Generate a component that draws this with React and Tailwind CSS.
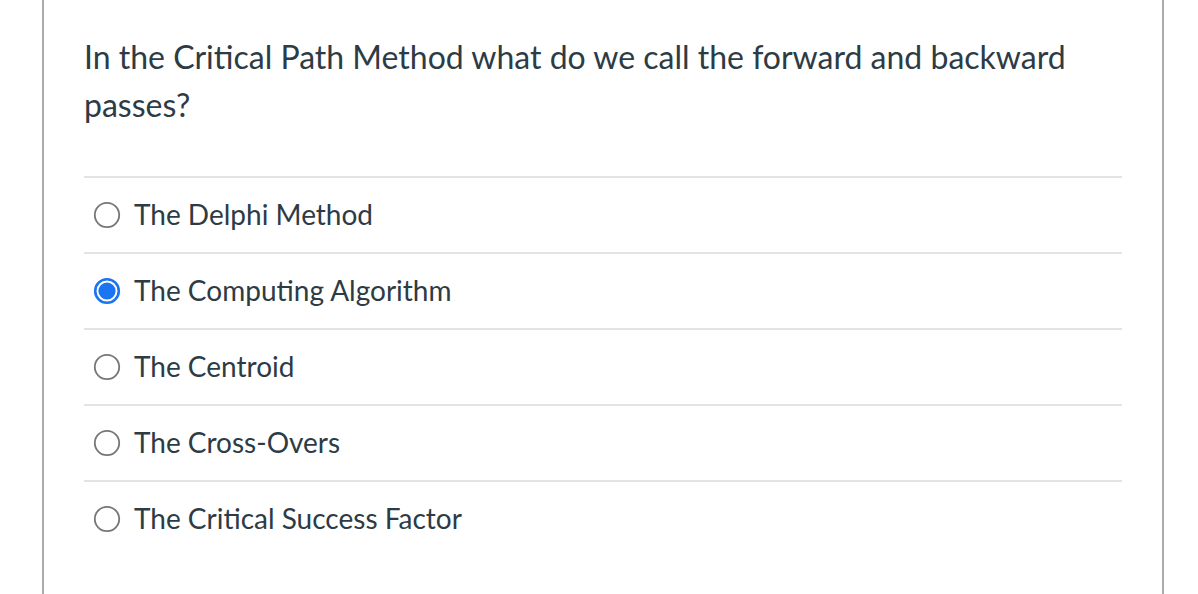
const ANSWERS = [
  { label: "The Delphi Method" },
  { label: "The Computing Algorithm", checked: true },
  { label: "The Centroid" },
  { label: "The Cross-Overs" },
  { label: "The Critical Success Factor" },
];

function Radio({ checked }) {
  if (checked) {
    return (
      <svg width="28" height="28" viewBox="0 0 28 28" className="shrink-0">
        <circle cx="14" cy="14" r="11.8" fill="#fff" stroke="#1b74f1" strokeWidth="2.6" />
        <circle cx="14" cy="14" r="8.6" fill="#1b74f1" />
      </svg>
    );
  }
  return (
    <svg width="28" height="28" viewBox="0 0 28 28" className="shrink-0">
      <circle cx="14" cy="14" r="12.2" fill="#fff" stroke="#767676" strokeWidth="1.8" />
    </svg>
  );
}

export default function App() {
  return (
    <div
      className="w-[1198px] h-[594px] bg-white overflow-hidden"
      style={{ fontFamily: "Lato, 'Noto Sans', sans-serif" }}
    >
      <div className="ml-[42px] w-[1122px] h-full border-x-2 border-[#ababab] px-[40px] pt-[33px]">
        <p className="text-[32px] leading-[48px] text-[#2d3b45]">
          In the Critical Path Method what do we call the forward and backward passes?
        </p>

        <div className="mt-[47px]">
          {ANSWERS.map((a) => (
            <div key={a.label} className="border-t-2 border-[#e3e3e3] h-[76px] flex items-center pl-[9px] gap-[13px]">
              <Radio checked={a.checked} />
              <span className="text-[28px] leading-[34px] text-[#2d3b45] -mt-[2px]">{a.label}</span>
            </div>
          ))}
        </div>
      </div>
    </div>
  );
}
